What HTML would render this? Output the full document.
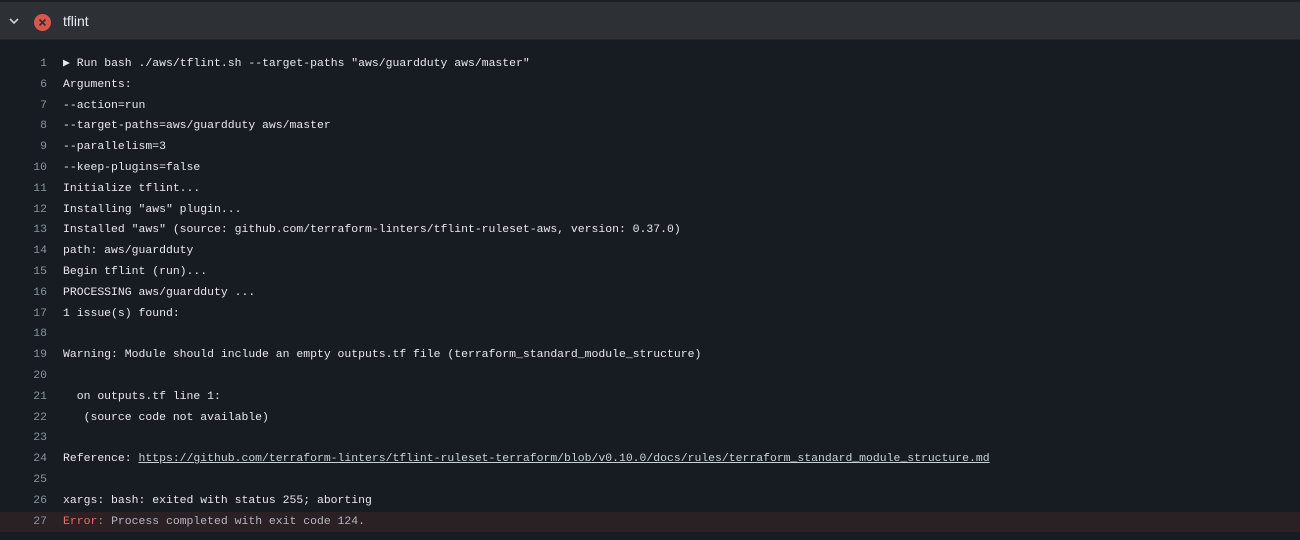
<!DOCTYPE html>
<html><head><style>
html,body{margin:0;padding:0;background:#171b22;width:1300px;height:540px;overflow:hidden}
.hdr{position:absolute;left:0;top:0;width:1300px;height:40px;background:#2d3035;border-top:2px solid #1c1f24;box-sizing:border-box;border-bottom:1px solid #202328}
.chev{position:absolute;left:8px;top:13px}
.x{position:absolute;left:34px;top:12px;width:17px;height:17px;border-radius:50%;background:#d9574a}
.title{position:absolute;left:63px;top:11px;font:14px "Liberation Sans",sans-serif;color:#e6edf3}
.log{position:absolute;left:0;top:54px;width:1300px;font:11.45px/20.8px "Liberation Mono",monospace;color:#e6eaef}
.r{height:20.8px;white-space:pre;position:relative}
.n{display:inline-block;width:47px;text-align:right;color:#8b949e;margin-right:16px}
.err{background:#2b2125}
.e{color:#e8705f}
.g{color:#b3b8bf}
a{color:#c9d1d9;text-decoration:underline}
</style></head><body>
<div class="hdr">
<svg class="chev" width="12" height="12" viewBox="0 0 12 12"><path d="M2 4l4 4 4-4" stroke="#c9d1d9" stroke-width="1.6" fill="none"/></svg>
<div class="x"><svg width="17" height="17" viewBox="0 0 17 17"><path d="M5.5 5.5l6 6M11.5 5.5l-6 6" stroke="#2d3035" stroke-width="1.6"/></svg></div>
<div class="title">tflint</div>
</div>
<div class="log">
<div class="r"><span class="n">1</span>▶ Run bash ./aws/tflint.sh --target-paths "aws/guardduty aws/master"</div>
<div class="r"><span class="n">6</span>Arguments:</div>
<div class="r"><span class="n">7</span>--action=run</div>
<div class="r"><span class="n">8</span>--target-paths=aws/guardduty aws/master</div>
<div class="r"><span class="n">9</span>--parallelism=3</div>
<div class="r"><span class="n">10</span>--keep-plugins=false</div>
<div class="r"><span class="n">11</span>Initialize tflint...</div>
<div class="r"><span class="n">12</span>Installing "aws" plugin...</div>
<div class="r"><span class="n">13</span>Installed "aws" (source: github.com/terraform-linters/tflint-ruleset-aws, version: 0.37.0)</div>
<div class="r"><span class="n">14</span>path: aws/guardduty</div>
<div class="r"><span class="n">15</span>Begin tflint (run)...</div>
<div class="r"><span class="n">16</span>PROCESSING aws/guardduty ...</div>
<div class="r"><span class="n">17</span>1 issue(s) found:</div>
<div class="r"><span class="n">18</span></div>
<div class="r"><span class="n">19</span>Warning: Module should include an empty outputs.tf file (terraform_standard_module_structure)</div>
<div class="r"><span class="n">20</span></div>
<div class="r"><span class="n">21</span>  on outputs.tf line 1:</div>
<div class="r"><span class="n">22</span>   (source code not available)</div>
<div class="r"><span class="n">23</span></div>
<div class="r"><span class="n">24</span>Reference: <a>https://github.com/terraform-linters/tflint-ruleset-terraform/blob/v0.10.0/docs/rules/terraform_standard_module_structure.md</a></div>
<div class="r"><span class="n">25</span></div>
<div class="r"><span class="n">26</span>xargs: bash: exited with status 255; aborting</div>
<div class="r err"><span class="n">27</span><span class="e">Error:</span> <span class="g">Process completed with exit code 124.</span></div>
</div>
</body></html>
